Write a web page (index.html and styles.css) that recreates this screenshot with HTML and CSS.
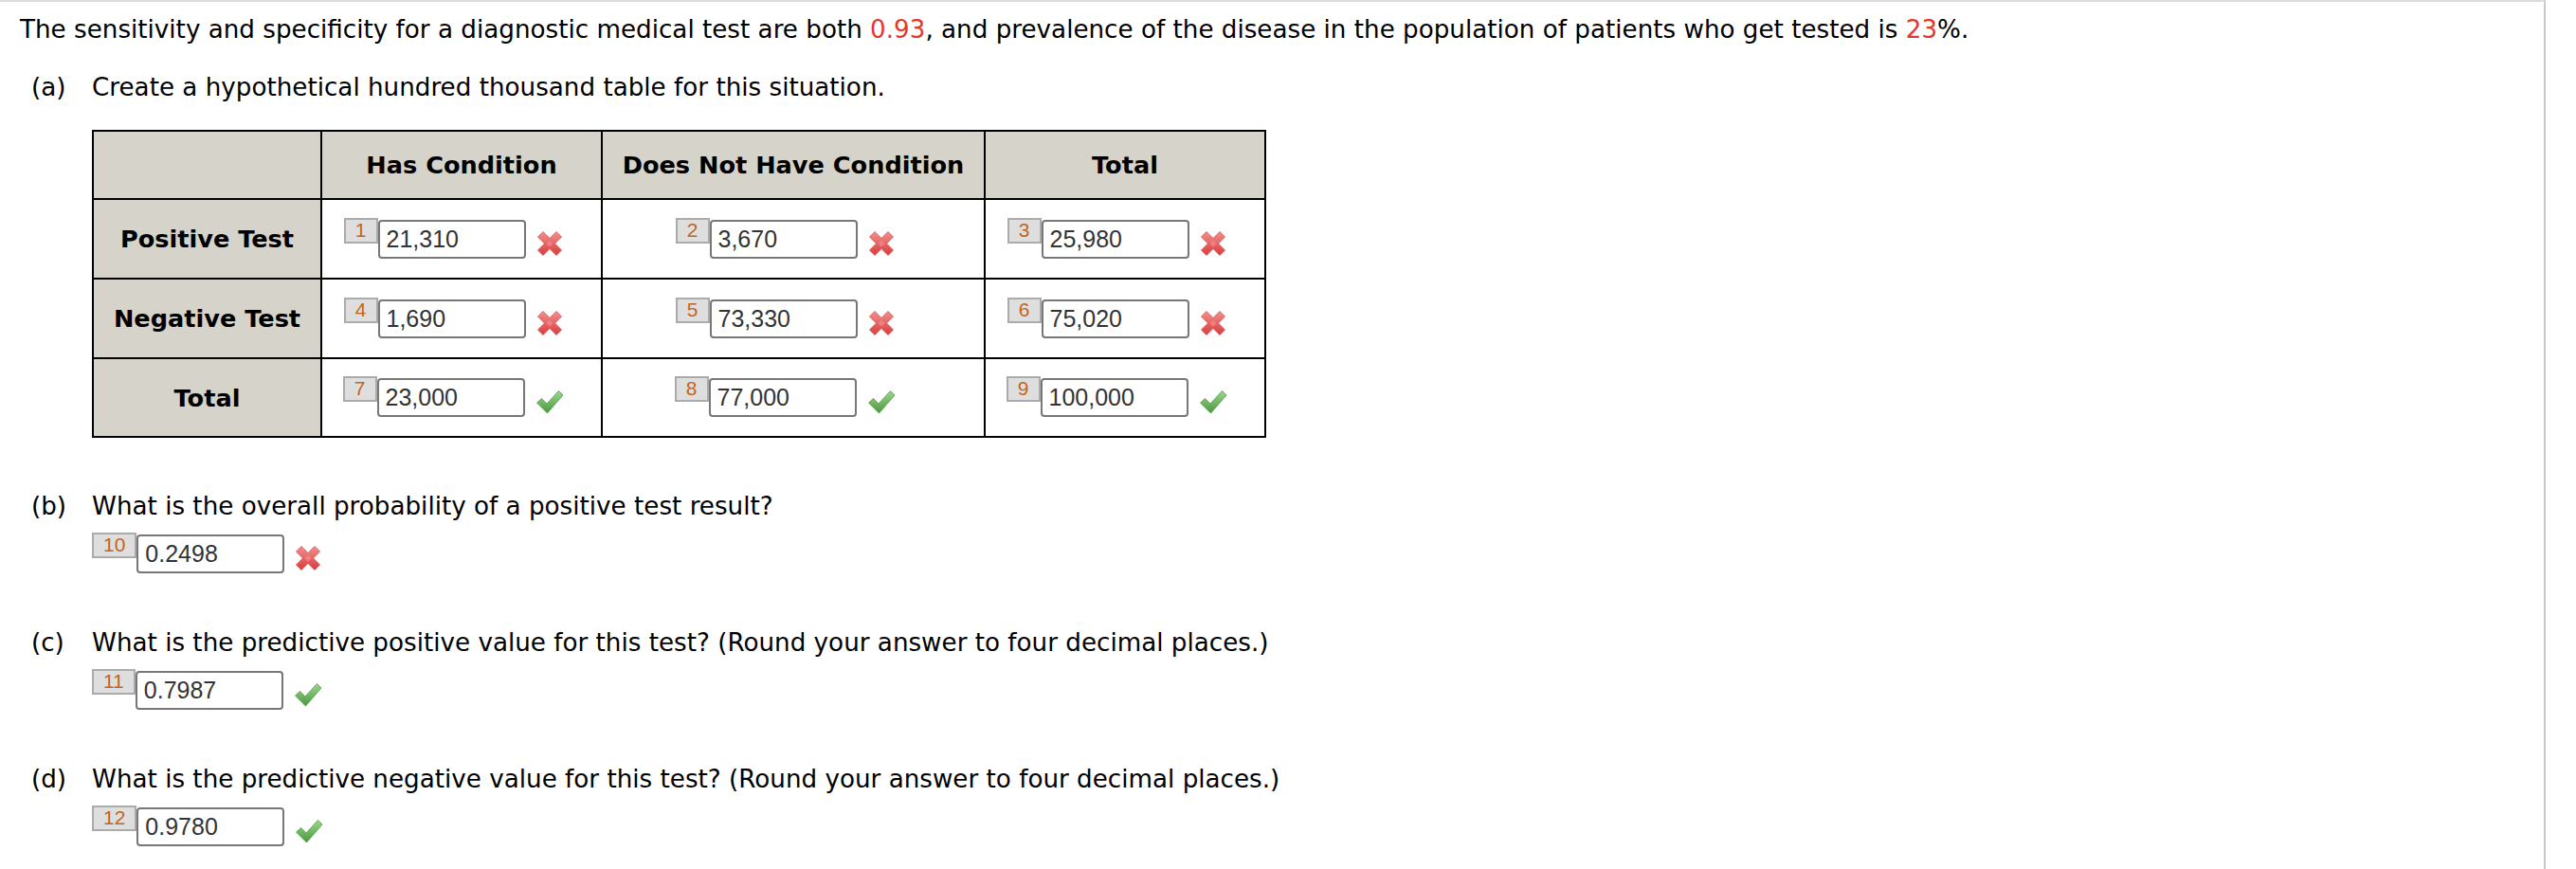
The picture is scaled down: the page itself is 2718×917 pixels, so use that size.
FILE: index.html
```html
<!DOCTYPE html>
<html>
<head>
<meta charset="utf-8">
<link rel="stylesheet" href="styles.css">
</head>
<body>
<div class="page">
  <p class="intro">The sensitivity and specificity for a diagnostic medical test are both <span class="red">0.93</span>, and prevalence of the disease in the population of patients who get tested is <span class="red">23</span>%.</p>

  <div class="part part-a">
    <div class="q"><span class="ql">(a)</span><span class="qt">Create a hypothetical hundred thousand table for this situation.</span></div>
    <table class="grid">
      <colgroup><col class="c1"><col class="c2"><col class="c3"><col class="c4"></colgroup>
      <tr class="hrow">
        <th class="corner"></th>
        <th>Has Condition</th>
        <th>Does Not Have Condition</th>
        <th>Total</th>
      </tr>
      <tr class="brow">
        <th class="rh">Positive Test</th>
        <td><span class="ans"><span class="num">1</span><span class="inp">21,310</span><svg class="ico x" viewBox="0 0 28 28"><use href="#xmark"/></svg></span></td>
        <td><span class="ans"><span class="num">2</span><span class="inp">3,670</span><svg class="ico x" viewBox="0 0 28 28"><use href="#xmark"/></svg></span></td>
        <td><span class="ans"><span class="num">3</span><span class="inp">25,980</span><svg class="ico x" viewBox="0 0 28 28"><use href="#xmark"/></svg></span></td>
      </tr>
      <tr class="brow">
        <th class="rh">Negative Test</th>
        <td><span class="ans"><span class="num">4</span><span class="inp">1,690</span><svg class="ico x" viewBox="0 0 28 28"><use href="#xmark"/></svg></span></td>
        <td><span class="ans"><span class="num">5</span><span class="inp">73,330</span><svg class="ico x" viewBox="0 0 28 28"><use href="#xmark"/></svg></span></td>
        <td><span class="ans"><span class="num">6</span><span class="inp">75,020</span><svg class="ico x" viewBox="0 0 28 28"><use href="#xmark"/></svg></span></td>
      </tr>
      <tr class="brow last">
        <th class="rh">Total</th>
        <td><span class="ans"><span class="num">7</span><span class="inp">23,000</span><svg class="ico ok" viewBox="0 0 30 26"><use href="#check"/></svg></span></td>
        <td><span class="ans"><span class="num">8</span><span class="inp">77,000</span><svg class="ico ok" viewBox="0 0 30 26"><use href="#check"/></svg></span></td>
        <td><span class="ans"><span class="num">9</span><span class="inp">100,000</span><svg class="ico ok" viewBox="0 0 30 26"><use href="#check"/></svg></span></td>
      </tr>
    </table>
  </div>

  <div class="part">
    <div class="q"><span class="ql">(b)</span><span class="qt">What is the overall probability of a positive test result?</span></div>
    <div class="arow"><span class="ans"><span class="num">10</span><span class="inp">0.2498</span><svg class="ico x" viewBox="0 0 28 28"><use href="#xmark"/></svg></span></div>
  </div>

  <div class="part">
    <div class="q"><span class="ql">(c)</span><span class="qt">What is the predictive positive value for this test? (Round your answer to four decimal places.)</span></div>
    <div class="arow"><span class="ans"><span class="num">11</span><span class="inp">0.7987</span><svg class="ico ok" viewBox="0 0 30 26"><use href="#check"/></svg></span></div>
  </div>

  <div class="part">
    <div class="q"><span class="ql">(d)</span><span class="qt">What is the predictive negative value for this test? (Round your answer to four decimal places.)</span></div>
    <div class="arow"><span class="ans"><span class="num">12</span><span class="inp">0.9780</span><svg class="ico ok" viewBox="0 0 30 26"><use href="#check"/></svg></span></div>
  </div>
</div>

<svg class="defs" width="0" height="0">
  <defs>
    <linearGradient id="gx" x1="0" y1="0" x2="0" y2="1">
      <stop offset="0" stop-color="#f29090"/>
      <stop offset="1" stop-color="#d83c3c"/>
    </linearGradient>
    <linearGradient id="gc" x1="0" y1="0" x2="0" y2="1">
      <stop offset="0" stop-color="#9ad98c"/>
      <stop offset="1" stop-color="#4a983e"/>
    </linearGradient>
    <g id="xmark">
      <path d="M1.5 7 L7 1.5 L14 8.5 L21 1.5 L26.5 7 L19.5 14 L26.5 21 L21 26.5 L14 19.5 L7 26.5 L1.5 21 L8.5 14 Z" fill="url(#gx)" stroke="#d84848" stroke-width="0.8" stroke-linejoin="round"/>
      <path d="M10.5 14 L14 10.5 L17.5 14 L14 17.5 Z" fill="#ef8080"/>
    </g>
    <g id="check">
      <path d="M1.5 14 L6.5 9.5 L12 15 L24.5 1.5 L29 6 L12.5 25 Z" fill="url(#gc)" stroke="#4f9a44" stroke-width="0.8" stroke-linejoin="round"/>
    </g>
  </defs>
</svg>
</body>
</html>
```

FILE: styles.css
```css
html, body {
  margin: 0;
  padding: 0;
  background: #fff;
}

body {
  font-family: "DejaVu Sans", Verdana, sans-serif;
  font-size: 26.2px;
  color: #000;
}

.page {
  box-sizing: border-box;
  width: 2686px;
  height: 917px;
  border-top: 2px solid #dcdcdc;
  border-right: 2px solid #c8c8c8;
  padding-left: 21px;
}

.intro {
  margin: 0;
  padding-top: 15px;
  line-height: 28px;
}

.red {
  color: #e5372a;
}

.part {
  padding-left: 12px;
  margin-top: 58px;
}

.part-a {
  margin-top: 33px;
}

.q {
  display: flex;
  line-height: 28px;
}

.ql {
  width: 64px;
  flex: none;
}

.grid {
  margin-top: 31px;
  margin-left: 64px;
  border-collapse: collapse;
  table-layout: fixed;
  width: 1237px;
}

.c1 { width: 241px; }
.c2 { width: 296px; }
.c3 { width: 404px; }
.c4 { width: 296px; }

.grid th,
.grid td {
  border: 2px solid #000;
  padding: 0;
  text-align: center;
  vertical-align: middle;
}

.grid th {
  background: #d6d3ca;
  font-weight: bold;
  font-size: 25.6px;
}

.hrow {
  height: 72px;
}

.brow {
  height: 84px;
}

.brow.last {
  height: 83px;
}

.ans {
  display: inline-flex;
  align-items: flex-start;
  font-family: "Liberation Sans", Arial, sans-serif;
  font-weight: normal;
  text-align: left;
  vertical-align: middle;
}

.grid .ans {
  margin-right: 18px;
}

.num {
  box-sizing: border-box;
  min-width: 36px;
  height: 27px;
  padding: 0 10px;
  margin-top: -2px;
  background: #dedede;
  border: 2px solid #ababab;
  color: #c4651c;
  font-size: 21px;
  line-height: 22px;
  text-align: center;
}

.inp {
  box-sizing: border-box;
  width: 156px;
  height: 41px;
  padding-left: 7px;
  border: 2px solid #777;
  border-radius: 4px;
  background: #fff;
  color: #333;
  font-size: 25px;
  line-height: 37px;
}

.ico {
  flex: none;
  margin-left: 11px;
}

.ico.x {
  width: 28px;
  height: 28px;
  margin-top: 11px;
}

.ico.ok {
  width: 30px;
  height: 26px;
  margin-top: 12px;
}

.arow {
  margin-top: 16px;
  padding-left: 64px;
  height: 42px;
}

.defs {
  position: absolute;
  width: 0;
  height: 0;
}
```
